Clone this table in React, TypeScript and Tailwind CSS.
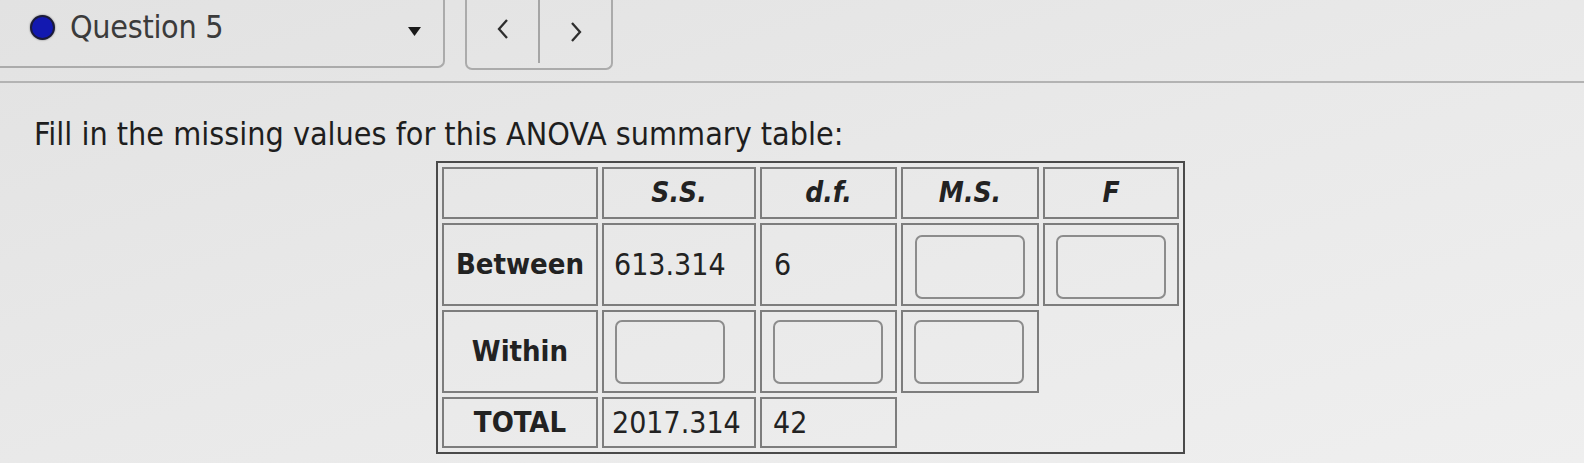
import React from "react";

/* ANOVA question card — header bar, prompt, fill-in table */

const font = {
  fontFamily: '"DejaVu Sans Condensed", "DejaVu Sans", Tahoma, sans-serif',
};

function Blank() {
  return (
    <div className="w-[110px] h-[64px] rounded-[7px] border-2 border-[#8c8c8c]" />
  );
}

const cell = "border-2 border-[#7d7d7d] p-0 align-middle";
const label = "border-2 border-[#7d7d7d] p-0 align-middle text-center font-semibold text-[29px]";

export default function App() {
  return (
    <div
      className="relative w-full h-[463px] overflow-hidden bg-gradient-to-br from-[#e2e2e2] via-[#e9e9e9] to-[#efefef] text-[#222]"
      style={font}
    >
      {/* Top bar */}
      <div className="flex items-start">
        <div className="w-[445px] h-[68px] border-2 border-t-0 border-l-0 border-[#ababab] rounded-br-[7px] flex items-center pl-[30px] pr-[22px]">
          <span className="w-[25px] h-[25px] rounded-full bg-[#1218b0] border-2 border-[#1b1b3a] shadow-[0_0_2px_rgba(0,0,0,0.5)] -mt-[12px]" />
          <span className="ml-[15px] -mt-[12px] text-[32px] leading-none text-[#3b3b3b] tracking-[-0.3px]">
            Question 5
          </span>
          <svg className="ml-auto -mt-[3px]" width="13" height="9" viewBox="0 0 13 9">
            <path d="M0 0 L13 0 L6.5 9 Z" fill="#1a1a1a" />
          </svg>
        </div>
        <div className="ml-[20px] w-[148px] h-[70px] border-2 border-t-0 border-[#ababab] rounded-b-[7px] flex">
          <div className="w-[73px] h-full border-r-2 border-[#a5a5a5] flex items-center justify-center -mt-[5px]">
            <svg width="12" height="22" viewBox="0 0 12 22">
              <polyline points="10,2 2,11 10,20" fill="none" stroke="#2e2e2e" strokeWidth="2.3" />
            </svg>
          </div>
          <div className="flex-1 flex items-center justify-center -mt-[5px]">
            <svg width="12" height="22" viewBox="0 0 12 22">
              <polyline points="2,2 10,11 2,20" fill="none" stroke="#2e2e2e" strokeWidth="2.3" />
            </svg>
          </div>
        </div>
      </div>
      <div className="mt-[11px] h-[2px] bg-[#b3b3b3]" />

      {/* Prompt */}
      <p className="ml-[34px] mt-[35px] text-[32px] leading-none text-[#1e1e1e]">
        Fill in the missing values for this ANOVA summary table:
      </p>

      {/* Table */}
      <table className="ml-[436px] mt-[11px] border-separate border-spacing-[4px] border-2 border-[#4a4a4a] text-[30px] leading-none">
        <tbody>
          <tr className="h-[52px] text-[28px]">
            <td className={`${cell} w-[156px]`} />
            <th className={`${cell} w-[154px] font-bold italic text-center`}>S.S.</th>
            <th className={`${cell} w-[137px] font-bold italic text-center`}>d.f.</th>
            <th className={`${cell} w-[138px] font-bold italic text-center`}>M.S.</th>
            <th className={`${cell} w-[136px] font-bold italic text-center`}>F</th>
          </tr>
          <tr className="h-[83px]">
            <td className={label}>Between</td>
            <td className={`${cell} pl-[10px]`}>613.314</td>
            <td className={`${cell} pl-[12px]`}>6</td>
            <td className={`${cell} pl-[12px] pt-[4px]`}>
              <Blank />
            </td>
            <td className={`${cell} pl-[11px] pt-[4px]`}>
              <Blank />
            </td>
          </tr>
          <tr className="h-[83px]">
            <td className={label}>Within</td>
            <td className={`${cell} pl-[11px]`}>
              <Blank />
            </td>
            <td className={`${cell} pl-[11px]`}>
              <Blank />
            </td>
            <td className={`${cell} pl-[11px]`}>
              <Blank />
            </td>
            <td className="p-0" />
          </tr>
          <tr className="h-[51px]">
            <td className={label}>TOTAL</td>
            <td className={`${cell} pl-[8px]`}>2017.314</td>
            <td className={`${cell} pl-[11px]`}>42</td>
            <td className="p-0" />
            <td className="p-0" />
          </tr>
        </tbody>
      </table>
    </div>
  );
}
